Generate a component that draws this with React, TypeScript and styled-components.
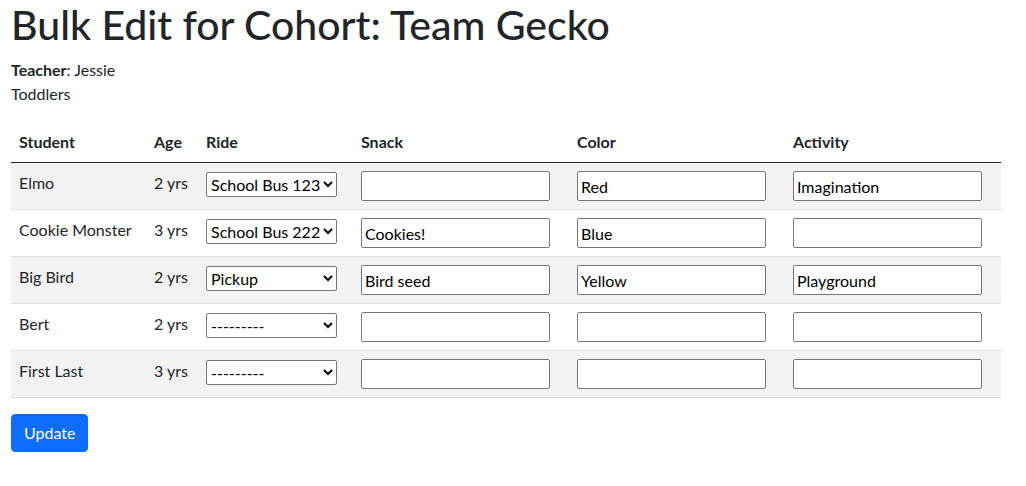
import styled, { createGlobalStyle } from 'styled-components';

const GlobalStyle = createGlobalStyle`
  *, *::before, *::after { box-sizing: border-box; }
  body {
    margin: 0;
    font-family: Lato, "Noto Sans", sans-serif;
    font-size: 16px;
    line-height: 1.5;
    color: #212529;
    background: #fff;
  }
`;

const Container = styled.div`
  padding: 0 11px;
  width: 1012px;
`;

const Title = styled.h1`
  margin: 0 0 9px;
  font-size: 41px;
  font-weight: 500;
  line-height: 1.2;
`;

const Info = styled.p`
  margin: 0;
  line-height: 24px;
`;

const Table = styled.table`
  width: 990px;
  margin: 16px 0;
  border-collapse: collapse;
  vertical-align: top;
`;

const HeadCell = styled.th<{ $w: number }>`
  width: ${(p) => p.$w}px;
  padding: 8px;
  text-align: left;
  font-weight: 700;
  vertical-align: bottom;
  border-bottom: 1px solid #212529;
`;

const Row = styled.tr<{ $striped: boolean }>`
  background: ${(p) => (p.$striped ? '#f2f2f2' : '#fff')};
  border-bottom: 1px solid #dee2e6;
`;

const Cell = styled.td`
  padding: 8px;
  vertical-align: top;
`;

const TextBox = styled.input`
  display: block;
  width: 189px;
  height: 30px;
  margin: 0;
  padding: 1px 3px;
  border: 1px solid #767676;
  border-radius: 2px;
  font: inherit;
  color: #000;
  background: #fff;
`;

const RideSelect = styled.select`
  display: block;
  width: 131px;
  height: 25px;
  margin-top: 1px;
  font: inherit;
  line-height: 1;
  color: #000;
  border: 1px solid #767676;
  border-radius: 2px;
  background: #fff;
`;

const Button = styled.button`
  font: inherit;
  color: #fff;
  background: #0d6efd;
  border: 1px solid #0d6efd;
  border-radius: 4px;
  padding: 6px 12px;
  line-height: 1.5;
`;

const rides = ['---------', 'School Bus 123', 'School Bus 222', 'Pickup'];

const students = [
  { name: 'Elmo', age: 2, ride: 'School Bus 123', snack: '', color: 'Red', activity: 'Imagination' },
  { name: 'Cookie Monster', age: 3, ride: 'School Bus 222', snack: 'Cookies!', color: 'Blue', activity: '' },
  { name: 'Big Bird', age: 2, ride: 'Pickup', snack: 'Bird seed', color: 'Yellow', activity: 'Playground' },
  { name: 'Bert', age: 2, ride: '---------', snack: '', color: '', activity: '' },
  { name: 'First Last', age: 3, ride: '---------', snack: '', color: '', activity: '' },
];

const App: React.FC = () => (
  <Container>
    <GlobalStyle />
    <Title>Bulk Edit for Cohort: Team Gecko</Title>
    <Info>
      <strong>Teacher</strong>: Jessie
    </Info>
    <Info>Toddlers</Info>
    <Table>
      <thead>
        <tr>
          <HeadCell $w={135}>Student</HeadCell>
          <HeadCell $w={52}>Age</HeadCell>
          <HeadCell $w={155}>Ride</HeadCell>
          <HeadCell $w={216}>Snack</HeadCell>
          <HeadCell $w={216}>Color</HeadCell>
          <HeadCell $w={216}>Activity</HeadCell>
        </tr>
      </thead>
      <tbody>
        {students.map((s, i) => (
          <Row key={s.name} $striped={i % 2 === 0}>
            <Cell>{s.name}</Cell>
            <Cell>{s.age} yrs</Cell>
            <Cell>
              <RideSelect defaultValue={s.ride}>
                {rides.map((r) => (
                  <option key={r}>{r}</option>
                ))}
              </RideSelect>
            </Cell>
            <Cell>
              <TextBox type="text" defaultValue={s.snack} />
            </Cell>
            <Cell>
              <TextBox type="text" defaultValue={s.color} />
            </Cell>
            <Cell>
              <TextBox type="text" defaultValue={s.activity} />
            </Cell>
          </Row>
        ))}
      </tbody>
    </Table>
    <Button type="button">Update</Button>
  </Container>
);

export default App;
